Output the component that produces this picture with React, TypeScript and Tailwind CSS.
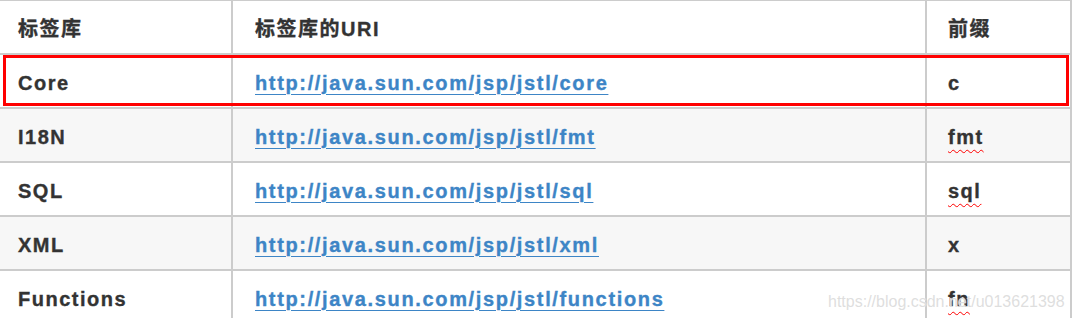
const rows = [
  { name: "Core", uri: "http://java.sun.com/jsp/jstl/core", prefix: "c", squiggle: false },
  { name: "I18N", uri: "http://java.sun.com/jsp/jstl/fmt", prefix: "fmt", squiggle: true },
  { name: "SQL", uri: "http://java.sun.com/jsp/jstl/sql", prefix: "sql", squiggle: true },
  { name: "XML", uri: "http://java.sun.com/jsp/jstl/xml", prefix: "x", squiggle: false },
  { name: "Functions", uri: "http://java.sun.com/jsp/jstl/functions", prefix: "fn", squiggle: true },
];

const font = "font-['Liberation_Sans','Noto_Sans_CJK_SC',sans-serif]";
const cellText =
  "flex items-center pt-[3px] text-[20px] leading-none font-bold tracking-[1.5px] [-webkit-text-stroke:0.35px_currentColor]";

function Row({
  children,
  shaded,
  highlight,
}: {
  children: React.ReactNode;
  shaded?: boolean;
  highlight?: boolean;
}) {
  return (
    <div
      className={`relative flex h-[54px] border-b-2 border-[#cccccc] ${
        shaded ? "bg-[#f7f7f7]" : "bg-white"
      }`}
    >
      {children}
      {highlight && (
        <div className="pointer-events-none absolute left-[3px] right-[3px] top-0 bottom-[1px] border-[3px] border-[#ff0000]" />
      )}
    </div>
  );
}

export default function App() {
  return (
    <div className={`relative h-[318px] w-[1072px] overflow-hidden bg-white ${font} text-[#333333]`}>
      <div className="border-t border-[#cccccc]">
        <Row>
          <div className={`${cellText} w-[233px] border-r-2 border-[#cccccc] pl-[18px]`}>标签库</div>
          <div className={`${cellText} w-[694px] border-r-2 border-[#cccccc] pl-[22px]`}>标签库的URI</div>
          <div className={`${cellText} flex-1 border-r-2 border-[#cccccc] pl-[21px]`}>前缀</div>
        </Row>
        {rows.map((r, i) => (
          <Row key={r.name} shaded={i % 2 === 1} highlight={i === 0}>
            <div className={`${cellText} w-[233px] border-r-2 border-[#cccccc] pl-[18px]`}>{r.name}</div>
            <div className={`${cellText} w-[694px] border-r-2 border-[#cccccc] pl-[22px]`}>
              <a className="tracking-[1.65px] text-[#3d85c6] underline decoration-1 underline-offset-[4px]">
                {r.uri}
              </a>
            </div>
            <div className={`${cellText} flex-1 border-r-2 border-[#cccccc] pl-[21px]`}>
              <span
                className={
                  r.squiggle
                    ? "underline decoration-wavy decoration-[#ff0000] decoration-1 underline-offset-[5px]"
                    : ""
                }
              >
                {r.prefix}
              </span>
            </div>
          </Row>
        ))}
      </div>
      <div className="pointer-events-none absolute left-[828px] top-[290px] font-['Liberation_Sans',sans-serif] text-[16px] text-[#d6d6d6]/80 [text-shadow:0_0_1px_#ffffff]">
        https://blog.csdn.net/u013621398
      </div>
    </div>
  );
}
